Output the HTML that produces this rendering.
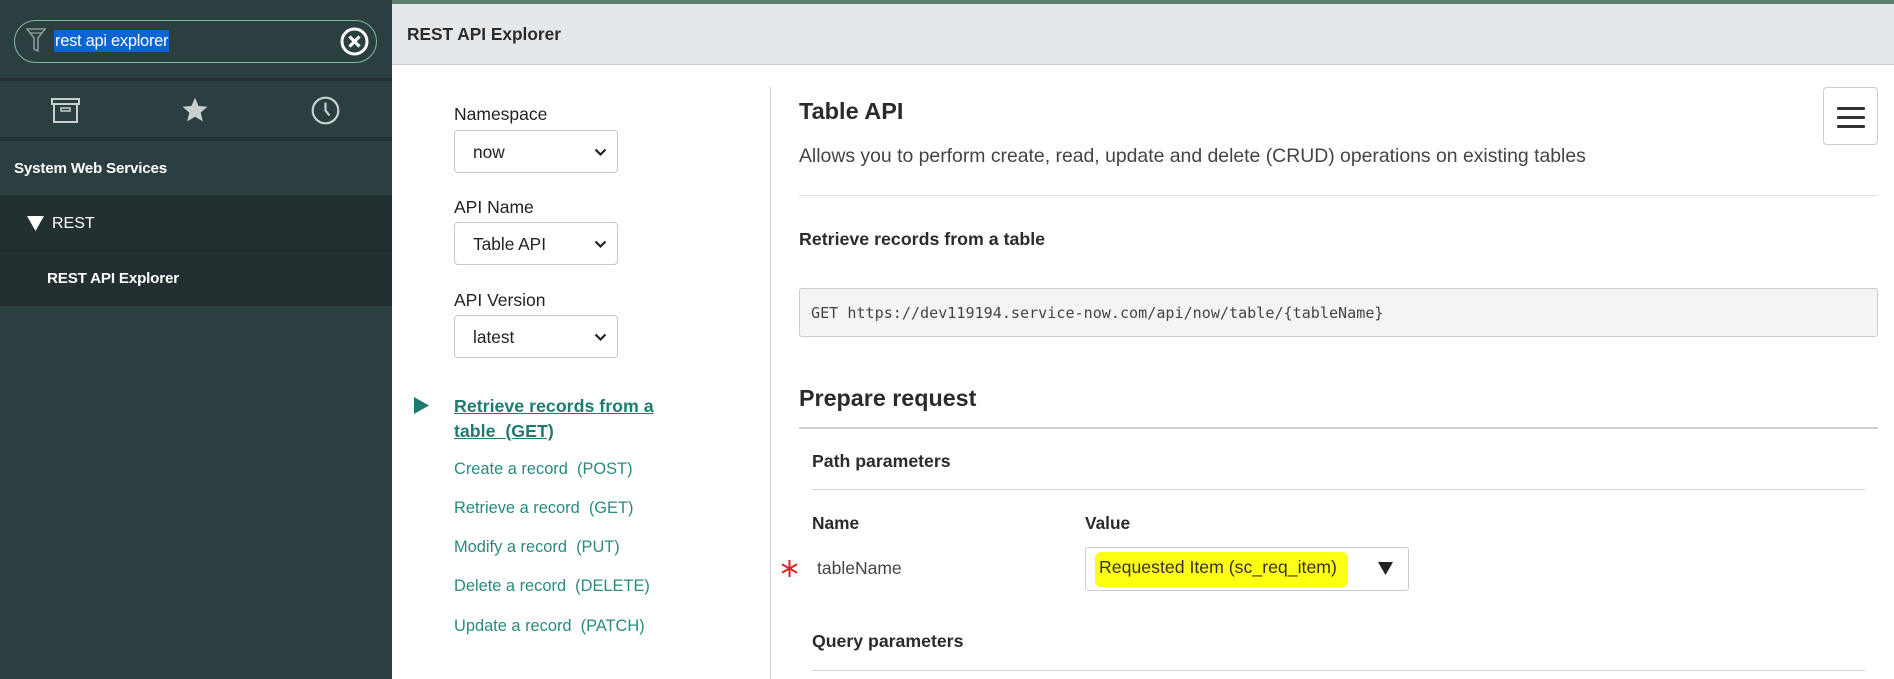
<!DOCTYPE html>
<html><head><meta charset="utf-8"><style>
*{margin:0;padding:0;box-sizing:border-box}
body{width:1894px;height:679px;overflow:hidden;background:#fff;font-family:"Liberation Sans",Arial,sans-serif;position:relative}
.a{position:absolute;white-space:nowrap}
.sb{position:absolute;left:0;top:0;width:392px;height:679px;background:#2b3e40}
.lnk{color:#2a8a80;font-size:16.4px;left:454px}
.sel{position:absolute;left:454px;width:164px;height:43px;border:1px solid #c8c8c8;border-radius:4px;background:#fff;font-size:17.3px;color:#222}
.sel span{position:absolute;left:18px;top:11px}
.sel svg{position:absolute;right:10px;top:17px}
.lbl{font-size:17.5px;color:#222;left:454px}
.b{font-weight:bold;color:#2b2b2b}
</style></head><body>
<div class="a" style="left:0;top:0;width:1894px;height:4px;background:#5b7e6c"></div>
<div class="sb">
  <div class="a" style="left:14px;top:20px;width:363px;height:43px;border:1px solid #7fb8a6;border-radius:22px"></div>
  <svg class="a" style="left:26px;top:27px" width="20" height="26" viewBox="0 0 20 26"><path d="M1 2h18l-7 9v13l-4-2V11z" fill="none" stroke="#8a9a9a" stroke-width="1.6"/><path d="M4 6h12" stroke="#8a9a9a" stroke-width="1.3"/></svg>
  <div class="a" style="left:54px;top:30px;height:22px;background:#0a64d4;color:#fff;font-size:16.5px;line-height:22px;padding:0 1px;letter-spacing:-0.3px">rest api explorer</div>
  <svg class="a" style="left:340px;top:27px" width="29" height="29" viewBox="0 0 29 29"><circle cx="14.5" cy="14.5" r="12.5" fill="none" stroke="#fff" stroke-width="3"/><path d="M9.5 9.5l10 10M19.5 9.5l-10 10" stroke="#fff" stroke-width="3.2"/></svg>
  <div class="a" style="left:0;top:78px;width:392px;height:3px;background:#223133"></div>
  <svg class="a" style="left:51px;top:98px" width="29" height="25" viewBox="0 0 29 25"><rect x="1" y="1" width="27" height="5" fill="none" stroke="#c9cfcf" stroke-width="2"/><rect x="3" y="6" width="23" height="18" fill="none" stroke="#c9cfcf" stroke-width="2"/><rect x="10" y="10" width="9" height="3" fill="none" stroke="#c9cfcf" stroke-width="1.5"/></svg>
  <svg class="a" style="left:181px;top:96px" width="28" height="28" viewBox="0 0 24 24"><path d="M12 1.5l3.1 7.1 7.6.6-5.8 5 1.8 7.5L12 17.8 5.3 21.7l1.8-7.5-5.8-5 7.6-.6z" fill="#c9cfcf"/></svg>
  <svg class="a" style="left:311px;top:96px" width="29" height="29" viewBox="0 0 29 29"><circle cx="14.5" cy="14.5" r="12.8" fill="none" stroke="#c9cfcf" stroke-width="2.2"/><path d="M14.5 6.5v8l4 5" fill="none" stroke="#c9cfcf" stroke-width="2.2"/></svg>
  <div class="a" style="left:0;top:137px;width:392px;height:4px;background:#223133"></div>
  <div class="a" style="left:14px;top:160px;color:#fff;font-weight:bold;font-size:15.2px;letter-spacing:-0.2px">System Web Services</div>
  <div class="a" style="left:0;top:195px;width:392px;height:55px;background:#223032"></div>
  <svg class="a" style="left:27px;top:216px" width="17" height="15" viewBox="0 0 17 15"><path d="M0 0h17L8.5 15z" fill="#fff"/></svg>
  <div class="a" style="left:52px;top:215px;color:#fff;font-size:16px">REST</div>
  <div class="a" style="left:0;top:250px;width:392px;height:1px;background:#1b2728"></div>
  <div class="a" style="left:0;top:251px;width:392px;height:54px;background:#223032"></div>
  <div class="a" style="left:47px;top:270px;color:#fff;font-weight:bold;font-size:15.2px;letter-spacing:-0.2px">REST API Explorer</div>
  <div class="a" style="left:0;top:305px;width:392px;height:1px;background:#1b2728"></div>
</div>
<div class="a" style="left:392px;top:4px;width:1502px;height:61px;background:#e4e8eb;border-bottom:1px solid #c9cccf"></div>
<div class="a b" style="left:407px;top:24px;font-size:17.3px">REST API Explorer</div>

<div class="a lbl" style="top:104px">Namespace</div>
<div class="sel" style="top:130px"><span>now</span><svg width="13" height="9" viewBox="0 0 13 9"><path d="M1.5 1.5l5 5 5-5" fill="none" stroke="#222" stroke-width="2.2"/></svg></div>
<div class="a lbl" style="top:197px">API Name</div>
<div class="sel" style="top:222px"><span>Table API</span><svg width="13" height="9" viewBox="0 0 13 9"><path d="M1.5 1.5l5 5 5-5" fill="none" stroke="#222" stroke-width="2.2"/></svg></div>
<div class="a lbl" style="top:290px">API Version</div>
<div class="sel" style="top:315px"><span>latest</span><svg width="13" height="9" viewBox="0 0 13 9"><path d="M1.5 1.5l5 5 5-5" fill="none" stroke="#222" stroke-width="2.2"/></svg></div>

<svg class="a" style="left:414px;top:397px" width="15" height="17" viewBox="0 0 15 17"><path d="M0 0l15 8.5L0 17z" fill="#1f7b6f"/></svg>
<div class="a lnk" style="top:394px;font-size:17.8px;font-weight:bold;color:#1f7b6f;text-decoration:underline;line-height:25px;white-space:normal;width:230px">Retrieve records from a table&nbsp; (GET)</div>
<div class="a lnk" style="top:460px">Create a record&nbsp; (POST)</div>
<div class="a lnk" style="top:499px">Retrieve a record&nbsp; (GET)</div>
<div class="a lnk" style="top:538px">Modify a record&nbsp; (PUT)</div>
<div class="a lnk" style="top:577px">Delete a record&nbsp; (DELETE)</div>
<div class="a lnk" style="top:617px">Update a record&nbsp; (PATCH)</div>

<div class="a" style="left:770px;top:87px;width:1px;height:592px;background:#d0d0d0"></div>

<div class="a b" style="left:799px;top:98px;font-size:23.5px">Table API</div>
<div class="a" style="left:799px;top:145px;font-size:19.4px;color:#444">Allows you to perform create, read, update and delete (CRUD) operations on existing tables</div>
<div class="a" style="left:1823px;top:87px;width:55px;height:58px;border:1px solid #ccc;border-radius:4px;background:#fff"></div>
<div class="a" style="left:1837px;top:107px;width:28px;height:3px;background:#333;border-radius:1px"></div>
<div class="a" style="left:1837px;top:116px;width:28px;height:3px;background:#333;border-radius:1px"></div>
<div class="a" style="left:1837px;top:125px;width:28px;height:3px;background:#333;border-radius:1px"></div>
<div class="a" style="left:799px;top:195px;width:1079px;height:1px;background:#e0e0e0"></div>
<div class="a b" style="left:799px;top:229px;font-size:17.8px">Retrieve records from a table</div>
<div class="a" style="left:799px;top:288px;width:1079px;height:49px;background:#f4f4f4;border:1px solid #ccc;border-radius:3px"></div>
<div class="a" style="left:811px;top:304px;font-family:'DejaVu Sans Mono','Liberation Mono',monospace;font-size:15.1px;color:#444">GET https://dev119194.service-now.com/api/now/table/{tableName}</div>

<div class="a b" style="left:799px;top:385px;font-size:23.3px">Prepare request</div>
<div class="a" style="left:799px;top:427px;width:1079px;height:2px;background:#cfcfcf"></div>
<div class="a b" style="left:812px;top:451px;font-size:17.7px">Path parameters</div>
<div class="a" style="left:812px;top:489px;width:1053px;height:1px;background:#d0d0d0"></div>
<div class="a b" style="left:812px;top:513px;font-size:17.3px">Name</div>
<div class="a b" style="left:1085px;top:513px;font-size:17.3px">Value</div>
<svg class="a" style="left:781px;top:560px" width="17" height="17" viewBox="0 0 17 17"><path d="M8.5 0v17M1 4.2l15 8.6M16 4.2L1 12.8" stroke="#d22" stroke-width="2"/></svg>
<div class="a" style="left:817px;top:558px;font-size:17.5px;color:#444">tableName</div>
<div class="a" style="left:1085px;top:547px;width:324px;height:44px;border:1px solid #ccc;border-radius:3px;background:#fff"></div>
<div class="a" style="left:1095px;top:552px;width:253px;height:35px;background:#ffff14;border-radius:6px"></div>
<div class="a" style="left:1099px;top:557px;font-size:17.7px;color:#333">Requested Item (sc_req_item)</div>
<svg class="a" style="left:1378px;top:562px" width="15" height="13" viewBox="0 0 15 13"><path d="M0 0h15L7.5 13z" fill="#222"/></svg>
<div class="a b" style="left:812px;top:631px;font-size:17.7px">Query parameters</div>
<div class="a" style="left:812px;top:670px;width:1053px;height:1px;background:#d0d0d0"></div>
</body></html>
